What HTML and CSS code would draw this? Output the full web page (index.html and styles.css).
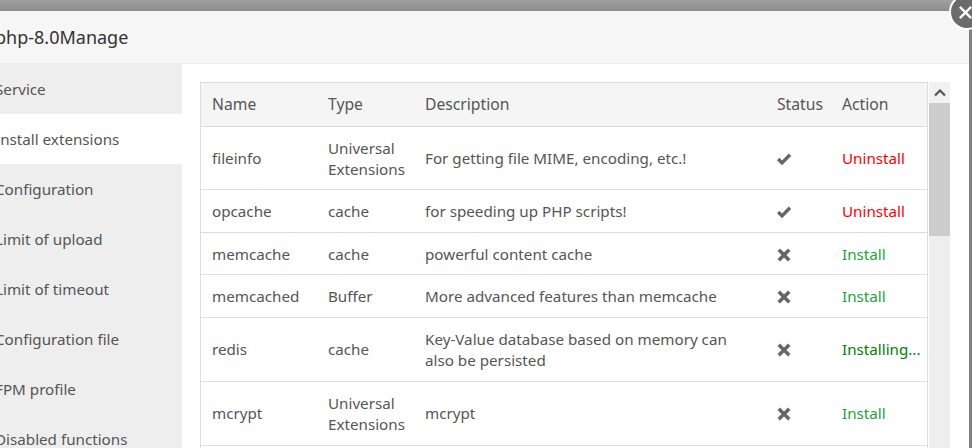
FILE: index.html
```html
<!DOCTYPE html>
<html lang="en">
<head>
  <meta charset="UTF-8" />
  <title>php-8.0 Manage</title>
  <link rel="stylesheet" href="styles.css">
</head>
<body>
  <div class="modal">
    <div class="modal-title">php-8.0Manage</div>
    <div class="modal-body">
      <ul class="side-menu">
        <li>Service</li>
        <li class="active">Install extensions</li>
        <li>Configuration</li>
        <li>Limit of upload</li>
        <li>Limit of timeout</li>
        <li>Configuration file</li>
        <li>FPM profile</li>
        <li>Disabled functions</li>
      </ul>
      <div class="content">
        <div class="table-box">
          <table class="ext-table">
            <thead>
              <tr><th class="c-name">Name</th><th class="c-type">Type</th><th class="c-desc">Description</th><th class="c-status">Status</th><th>Action</th></tr>
            </thead>
            <tbody>
              <tr>
                <td>fileinfo</td><td>Universal Extensions</td><td>For getting file MIME, encoding, etc.!</td>
                <td><svg class="ico" viewBox="0 0 16 16"><path d="M1 9.2 3.4 6.8 6 9.4 12.8 2.6 15.2 5 6 14.2z"/></svg></td>
                <td class="red">Uninstall</td>
              </tr>
              <tr>
                <td>opcache</td><td>cache</td><td>for speeding up PHP scripts!</td>
                <td><svg class="ico" viewBox="0 0 16 16"><path d="M1 9.2 3.4 6.8 6 9.4 12.8 2.6 15.2 5 6 14.2z"/></svg></td>
                <td class="red">Uninstall</td>
              </tr>
              <tr>
                <td>memcache</td><td>cache</td><td>powerful content cache</td>
                <td><svg class="ico" viewBox="0 0 16 16"><path d="M4 1.5 8 5.5 12 1.5 14.5 4 10.5 8 14.5 12 12 14.5 8 10.5 4 14.5 1.5 12 5.5 8 1.5 4z"/></svg></td>
                <td class="green">Install</td>
              </tr>
              <tr>
                <td>memcached</td><td>Buffer</td><td>More advanced features than memcache</td>
                <td><svg class="ico" viewBox="0 0 16 16"><path d="M4 1.5 8 5.5 12 1.5 14.5 4 10.5 8 14.5 12 12 14.5 8 10.5 4 14.5 1.5 12 5.5 8 1.5 4z"/></svg></td>
                <td class="green">Install</td>
              </tr>
              <tr>
                <td>redis</td><td>cache</td><td>Key-Value database based on memory can also be persisted</td>
                <td><svg class="ico" viewBox="0 0 16 16"><path d="M4 1.5 8 5.5 12 1.5 14.5 4 10.5 8 14.5 12 12 14.5 8 10.5 4 14.5 1.5 12 5.5 8 1.5 4z"/></svg></td>
                <td class="dark-green">Installing...</td>
              </tr>
              <tr>
                <td>mcrypt</td><td>Universal Extensions</td><td>mcrypt</td>
                <td><svg class="ico" viewBox="0 0 16 16"><path d="M4 1.5 8 5.5 12 1.5 14.5 4 10.5 8 14.5 12 12 14.5 8 10.5 4 14.5 1.5 12 5.5 8 1.5 4z"/></svg></td>
                <td class="green">Install</td>
              </tr>
              <tr class="next-row"><td colspan="5"></td></tr>
            </tbody>
          </table>
        </div>
        <div class="scrollbar">
          <div class="scroll-up"><svg viewBox="0 0 12 8"><path d="M1 6.5 6 1.5 11 6.5" /></svg></div>
          <div class="scroll-thumb"></div>
        </div>
      </div>
    </div>
  </div>
  <button class="close-btn"><svg viewBox="0 0 16 16"><path d="M2 2 14 14M14 2 2 14"/></svg></button>
</body>
</html>
```

FILE: styles.css
```css
html, body {
  margin: 0;
  height: 100%;
  overflow: hidden;
}
body {
  background: linear-gradient(#a0a0a0, #8c8c8c 11px, #808080 12px);
  font-family: "Noto Sans", "Open Sans", Arial, sans-serif;
  font-size: 15.2px;
  color: #555;
  padding: 11px 3px 0 0;
  box-sizing: border-box;
  position: relative;
}
.modal {
  margin-left: -20px;
  height: 437px;
  background: #fff;
  display: flex;
  flex-direction: column;
  overflow: hidden;
}
.modal-title {
  height: 52px;
  line-height: 52px;
  padding-left: 15px;
  font-size: 18px;
  color: #333;
  background: #f6f6f6;
  border-bottom: 1px solid #eee;
  flex-shrink: 0;
}
.modal-body {
  display: flex;
  flex: 1;
  min-height: 0;
}
.side-menu {
  list-style: none;
  margin: 0;
  padding: 0;
  width: 202px;
  flex-shrink: 0;
  background: #eee;
}
.side-menu li {
  height: 50px;
  line-height: 51px;
  padding-left: 15px;
  color: #555;
  white-space: nowrap;
}
.side-menu li.active {
  background: #fff;
}
.content {
  flex: 1;
  display: flex;
  align-items: flex-start;
  padding: 18px 19px 0 18px;
  min-width: 0;
}
.table-box {
  width: 728px;
  flex-shrink: 0;
}
.ext-table {
  width: 100%;
  border-collapse: collapse;
  table-layout: fixed;
  border: 1px solid #ddd;
}
.ext-table th {
  background: #f5f5f5;
  font-weight: normal;
  font-size: 15.7px;
  text-align: left;
  height: 42.5px;
  padding: 0 11px;
  border-bottom: 1px solid #ddd;
}
.ext-table td {
  padding: 11px 11px 9px;
  line-height: 21.45px;
  border-bottom: 1px solid #ddd;
  vertical-align: middle;
}
.c-name { width: 94px; }
.c-type { width: 75px; }
.c-desc { width: 330px; }
.c-status { width: 43px; }
.next-row td {
  height: 40px;
}
.ico {
  display: block;
  width: 16px;
  height: 16px;
  margin-left: -1px;
  fill: #666;
}
.red { color: #f00; }
.green { color: #20a53a; }
.dark-green { color: #008000; }
.scrollbar {
  width: 21px;
  height: 400px;
  margin-left: 1px;
  background: #eee;
  flex-shrink: 0;
}
.scroll-up {
  height: 21px;
  background: #f1f1f1;
  display: flex;
  align-items: center;
  justify-content: center;
}
.scroll-up svg {
  width: 12px;
  height: 8px;
  fill: none;
  stroke: #555;
  stroke-width: 2.2;
}
.scroll-thumb {
  height: 133px;
  background: #ccc;
}
.close-btn {
  position: absolute;
  top: -6px;
  left: 949px;
  width: 36px;
  height: 36px;
  padding: 0 4px 0 0;
  border: 2px solid #fff;
  border-radius: 50%;
  background: #6b6b6b;
  display: flex;
  align-items: center;
  justify-content: center;
}
.close-btn svg {
  width: 15px;
  height: 15px;
  fill: none;
  stroke: #fff;
  stroke-width: 2.6;
}
```
